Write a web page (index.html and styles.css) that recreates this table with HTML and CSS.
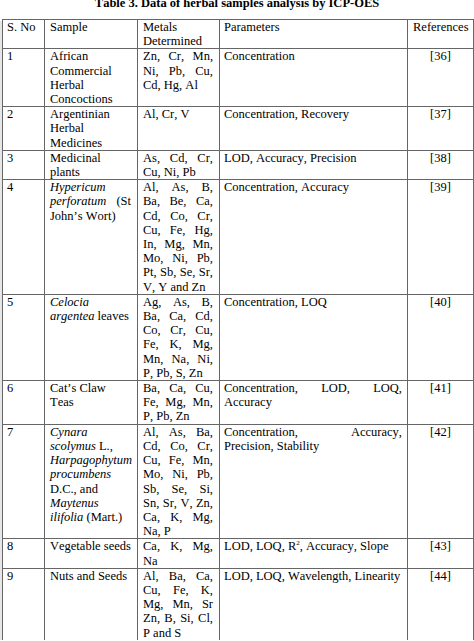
FILE: index.html
```html
<!DOCTYPE html>
<html lang="en">
<head>
<meta charset="utf-8">
<title>Table 3. Data of herbal samples analysis by ICP-OES</title>
<link rel="stylesheet" href="styles.css">
</head>
<body>
<h1 class="caption">Table 3. Data of herbal samples analysis by ICP-OES</h1>
<table class="data">
  <colgroup>
    <col class="c-no">
    <col class="c-sample">
    <col class="c-metals">
    <col class="c-params">
    <col class="c-refs">
  </colgroup>
  <thead>
    <tr>
      <th class="no">S. No</th>
      <th class="sample">Sample</th>
      <th class="metals head">Metals Determined</th>
      <th class="params">Parameters</th>
      <th class="refhead">References</th>
    </tr>
  </thead>
  <tbody>
    <tr>
      <td class="no">1</td>
      <td class="sample">African Commercial Herbal Concoctions</td>
      <td class="metals">Zn, Cr, Mn, Ni, Pb, Cu, Cd, Hg, Al</td>
      <td class="params">Concentration</td>
      <td class="ref">[36]</td>
    </tr>
    <tr>
      <td class="no">2</td>
      <td class="sample">Argentinian Herbal Medicines</td>
      <td class="metals">Al, Cr, V</td>
      <td class="params">Concentration, Recovery</td>
      <td class="ref">[37]</td>
    </tr>
    <tr>
      <td class="no">3</td>
      <td class="sample">Medicinal plants</td>
      <td class="metals">As, Cd, Cr, Cu, Ni, Pb</td>
      <td class="params">LOD, Accuracy, Precision</td>
      <td class="ref">[38]</td>
    </tr>
    <tr>
      <td class="no">4</td>
      <td class="sample justify"><i>Hypericum perforatum</i> (St John’s Wort)</td>
      <td class="metals">Al, As, B, Ba, Be, Ca, Cd, Co, Cr, Cu, Fe, Hg, In, Mg, Mn, Mo, Ni, Pb, Pt, Sb, Se, Sr, V, Y and Zn</td>
      <td class="params">Concentration, Accuracy</td>
      <td class="ref">[39]</td>
    </tr>
    <tr>
      <td class="no">5</td>
      <td class="sample"><i>Celocia argentea</i> leaves</td>
      <td class="metals">Ag, As, B, Ba, Ca, Cd, Co, Cr, Cu, Fe, K, Mg, Mn, Na, Ni, P, Pb, S, Zn</td>
      <td class="params">Concentration, LOQ</td>
      <td class="ref">[40]</td>
    </tr>
    <tr>
      <td class="no">6</td>
      <td class="sample">Cat’s Claw Teas</td>
      <td class="metals">Ba, Ca, Cu, Fe, Mg, Mn, P, Pb, Zn</td>
      <td class="params">Concentration, LOD, LOQ, Accuracy</td>
      <td class="ref">[41]</td>
    </tr>
    <tr>
      <td class="no">7</td>
      <td class="sample"><i>Cynara scolymus</i> L., <i>Harpagophytum procumbens</i> D.C., and <i>Maytenus ilifolia</i> (Mart.)</td>
      <td class="metals">Al, As, Ba, Cd, Co, Cr, Cu, Fe, Mn, Mo, Ni, Pb, Sb, Se, Si, Sn, Sr, V, Zn, Ca, K, Mg, Na, P</td>
      <td class="params">Concentration, Accuracy, Precision, Stability</td>
      <td class="ref">[42]</td>
    </tr>
    <tr>
      <td class="no">8</td>
      <td class="sample">Vegetable seeds</td>
      <td class="metals">Ca, K, Mg, Na</td>
      <td class="params">LOD, LOQ, R<sup>2</sup>, Accuracy, Slope</td>
      <td class="ref">[43]</td>
    </tr>
    <tr>
      <td class="no">9</td>
      <td class="sample">Nuts and Seeds</td>
      <td class="metals">Al, Ba, Ca, Cu, Fe, K, Mg, Mn, Sr Zn, B, Si, Cl, P and S</td>
      <td class="params">LOD, LOQ, Wavelength, Linearity</td>
      <td class="ref">[44]</td>
    </tr>
  </tbody>
</table>
</body>
</html>
```
FILE: styles.css
```css
html, body {
  margin: 0;
  padding: 0;
  background: #ffffff;
}

body {
  font-family: "Liberation Serif", "Times New Roman", serif;
  font-size: 12.5px;
  line-height: 14.2px;
  color: #000000;
  font-kerning: none;
  font-variant-ligatures: none;
}

.caption {
  margin: -4px 0 9px;
  font-size: 12.5px;
  line-height: 14px;
  font-weight: bold;
  text-align: center;
}

.data {
  margin-left: 2px;
  width: 472px;
  table-layout: fixed;
  border-collapse: separate;
  border-spacing: 0;
  border-right: 1px solid #666666;
  box-shadow: -2px 2px 0 #e6e6e6;
}

.c-no { width: 42px; }
.c-sample { width: 93px; }
.c-metals { width: 82px; }
.c-params { width: 188px; }
.c-refs { width: 66px; }

.data th,
.data td {
  box-sizing: border-box;
  padding: 0 5px 0 5px;
  border-top: 1px solid #666666;
  border-left: 1px solid #666666;
  vertical-align: top;
  text-align: left;
  font-weight: normal;
  line-height: 14.2px;
}

.data .no {
  padding-left: 4px;
}

.data .sample {
  padding-right: 6px;
  text-align: left;
}

.data .sample.justify {
  text-align: justify;
}

.data .metals {
  padding-right: 6px;
  text-align: justify;
}

.data .metals.head {
  text-align: left;
}

.data .params {
  padding-left: 4px;
  text-align: justify;
}

.data .ref {
  text-align: center;
}

.data sup {
  font-size: 7px;
  line-height: 0;
  vertical-align: 5px;
}
```
